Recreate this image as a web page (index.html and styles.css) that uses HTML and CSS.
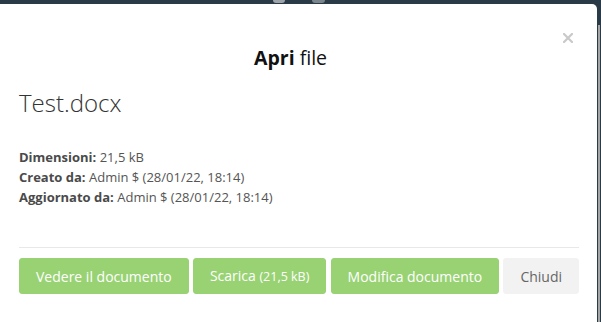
FILE: index.html
```html
<!DOCTYPE html>
<html lang="it">
<head>
    <meta charset="UTF-8">
    <meta name="viewport" content="width=device-width, initial-scale=1.0">
    <title>Apri file</title>
    <link rel="stylesheet" href="styles.css">
</head>
<body>

    <div class="topbar">
        <span class="peek peek-a"></span>
        <span class="peek peek-b"></span>
    </div>

    <div class="page">
        <div class="modal">
            <button class="close" aria-label="Chiudi">
                <svg width="10" height="10" viewBox="0 0 10 10"><path d="M1 1 L9 9 M9 1 L1 9" stroke="#c9c9c9" stroke-width="2.2" stroke-linecap="square"/></svg>
            </button>

            <div class="modal-header">
                <h4><strong>Apri</strong> file</h4>
            </div>

            <div class="modal-body">
                <h2 class="file-name">Test.docx</h2>
                <p><strong>Dimensioni:</strong> 21,5 kB</p>
                <p><strong>Creato da:</strong> Admin $ (28/01/22, 18:14)</p>
                <p><strong>Aggiornato da:</strong> Admin $ (28/01/22, 18:14)</p>
            </div>

            <div class="modal-footer">
                <button class="btn btn-green">Vedere il documento</button>
                <button class="btn btn-green">Scarica <small>(21,5 kB)</small></button>
                <button class="btn btn-green">Modifica documento</button>
                <button class="btn btn-light">Chiudi</button>
            </div>
        </div>

        <div class="scrollbar"><div class="thumb"></div></div>
    </div>

</body>
</html>
```

FILE: styles.css
```css
* {
    box-sizing: border-box;
}

html, body {
    height: 100%;
}

body {
    margin: 0;
    background: #2a3a46;
    font-family: "Open Sans", Arial, sans-serif;
    display: flex;
    flex-direction: column;
    overflow: hidden;
}

.topbar {
    height: 4px;
    display: flex;
    padding-left: 273px;
    gap: 27px;
}

.peek {
    display: block;
    height: 3px;
    background: #9ea5aa;
    border-radius: 0 0 3px 3px;
}

.peek-a { width: 12px; }
.peek-b { width: 13px; background: #7b858c; }

.page {
    flex: 1;
    display: flex;
}

.modal {
    flex: 1;
    position: relative;
    background: #fff;
    border-top-right-radius: 5px;
    padding: 0 18px 0 19px;
}

.scrollbar {
    width: 4px;
    padding: 21px 1px 0 1px;
}

.thumb {
    height: 100%;
    background: #a6a6a6;
}

.close {
    position: absolute;
    top: 29px;
    right: 24px;
    padding: 0;
    border: none;
    background: none;
    line-height: 0;
    cursor: pointer;
}

.modal-header {
    padding: 41px 17px 0 0;
    text-align: center;
}

.modal-header h4 {
    margin: 0;
    font-size: 19.5px;
    line-height: 26px;
    font-weight: normal;
    color: #111;
}

.modal-header strong {
    font-weight: 700;
}

.file-name {
    margin: 16px 0 28px;
    font-size: 24px;
    line-height: 32px;
    font-weight: 300;
    color: #333;
}

.modal-body p {
    margin: 0;
    font-size: 13px;
    line-height: 20px;
    color: #555;
}

.modal-body strong {
    color: #4a4a4a;
    font-weight: 700;
}

.modal-footer {
    margin-top: 40px;
    border-top: 1px solid #e8e8e8;
    padding-top: 10px;
    display: flex;
    justify-content: space-between;
}

.btn {
    font-family: inherit;
    font-size: 14px;
    line-height: 19px;
    padding: 7px 16px;
    border: 1px solid transparent;
    border-radius: 3px;
    white-space: nowrap;
    cursor: pointer;
}

.btn small {
    font-size: 12.5px;
}

.btn-green {
    background: #98d273;
    border-color: #98d273;
    color: #fff;
}

.btn-light {
    background: #f2f2f2;
    border-color: #f2f2f2;
    color: #666;
}
```
